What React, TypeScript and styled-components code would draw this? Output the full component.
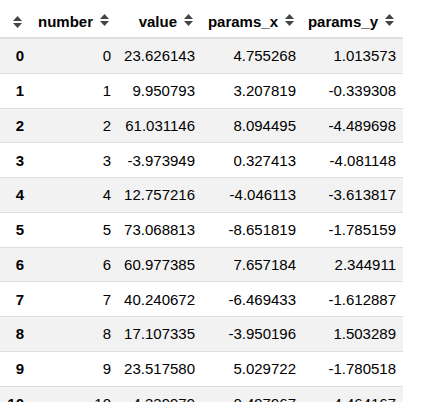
import React from "react";
import styled, { createGlobalStyle } from "styled-components";

const GlobalStyle = createGlobalStyle`
  html, body {
    margin: 0;
    padding: 0;
    background: #ffffff;
    overflow: hidden;
  }
  body {
    font-family: "Liberation Sans", Arial, sans-serif;
    font-size: 15px;
    color: #000000;
  }
`;

const COLS = "31px 87px 84px 101px 100px";

const Table = styled.div`
  width: 403px;
  display: flex;
  flex-direction: column;
`;

const HeaderRow = styled.div`
  display: grid;
  grid-template-columns: ${COLS};
  height: 39px;
  box-sizing: border-box;
  border-bottom: 2px solid #dedede;
  align-items: end;
  padding-bottom: 7.5px;
`;

const HeaderCell = styled.div`
  display: flex;
  justify-content: flex-end;
  align-items: center;
  font-weight: bold;
  padding-right: 7px;
  white-space: nowrap;
`;

const SortIconSvg = styled.svg`
  width: 9px;
  height: 12px;
  margin-left: 7px;
  margin-right: 2px;
  margin-bottom: 2px;
  flex: none;
`;

const Row = styled.div<{ $striped: boolean }>`
  display: grid;
  grid-template-columns: ${COLS};
  height: 34.75px;
  box-sizing: border-box;
  border-bottom: 1px solid #dddddd;
  background: ${(p) => (p.$striped ? "#f2f2f2" : "#ffffff")};
  align-items: center;
`;

const Cell = styled.div<{ $index?: boolean }>`
  text-align: right;
  padding-right: 7px;
  font-weight: ${(p) => (p.$index ? "bold" : "normal")};
  white-space: nowrap;
`;

const SortIcon = () => (
  <SortIconSvg viewBox="0 0 9 12">
    <polygon points="4.5,0 9,5 0,5" fill="#444" />
    <polygon points="0,7 9,7 4.5,12" fill="#444" />
  </SortIconSvg>
);

const rows: [string, string, string, string][] = [
  ["0", "23.626143", "4.755268", "1.013573"],
  ["1", "9.950793", "3.207819", "-0.339308"],
  ["2", "61.031146", "8.094495", "-4.489698"],
  ["3", "-3.973949", "0.327413", "-4.081148"],
  ["4", "12.757216", "-4.046113", "-3.613817"],
  ["5", "73.068813", "-8.651819", "-1.785159"],
  ["6", "60.977385", "7.657184", "2.344911"],
  ["7", "40.240672", "-6.469433", "-1.612887"],
  ["8", "17.107335", "-3.950196", "1.503289"],
  ["9", "23.517580", "5.029722", "-1.780518"],
  ["10", "-4.339979", "0.497967", "-4.464167"],
];

const headers = ["number", "value", "params_x", "params_y"];

export default function App() {
  return (
    <>
      <GlobalStyle />
      <Table>
        <HeaderRow>
          <HeaderCell>
            <SortIcon />
          </HeaderCell>
          {headers.map((h) => (
            <HeaderCell key={h}>
              {h}
              <SortIcon />
            </HeaderCell>
          ))}
        </HeaderRow>
        {rows.map((r, i) => (
          <Row key={i} $striped={i % 2 === 0}>
            <Cell $index>{i}</Cell>
            {r.map((v, j) => (
              <Cell key={j}>{v}</Cell>
            ))}
          </Row>
        ))}
      </Table>
    </>
  );
}
